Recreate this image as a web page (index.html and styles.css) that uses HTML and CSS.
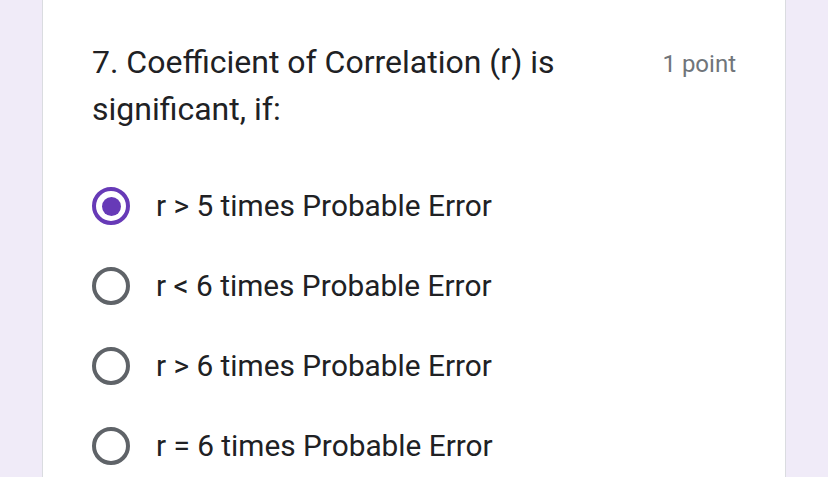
FILE: index.html
```html
<!DOCTYPE html>
<html>
<head>
<meta charset="utf-8">
<link rel="stylesheet" href="styles.css">
</head>
<body>
<div class="card">
  <div class="header">
    <div class="title">7. Coefficient of Correlation (r) is significant, if:</div>
    <div class="points">1 point</div>
  </div>
  <div class="options">
    <div class="option"><span class="radio checked"></span><span class="label">r &gt; 5 times Probable Error</span></div>
    <div class="option"><span class="radio"></span><span class="label">r &lt; 6 times Probable Error</span></div>
    <div class="option"><span class="radio"></span><span class="label">r &gt; 6 times Probable Error</span></div>
    <div class="option"><span class="radio"></span><span class="label">r = 6 times Probable Error</span></div>
  </div>
</div>
</body>
</html>
```
FILE: styles.css
```css
html, body {
  margin: 0;
  padding: 0;
  background: #f0ebf8;
  font-family: Roboto, "Liberation Sans", sans-serif;
  height: 477px;
  overflow: hidden;
}
.card {
  margin-left: 42px;
  width: 744px;
  box-sizing: border-box;
  height: 477px;
  background: #fff;
  border-left: 1px solid #dadce0;
  border-right: 1px solid #dadce0;
  padding: 39px 0 0 49px;
}
.header {
  display: flex;
  justify-content: space-between;
  align-items: flex-start;
}
.title {
  width: 490px;
  font-size: 32px;
  line-height: 47px;
  color: #202124;
}
.points {
  margin-right: 49px;
  padding-top: 2px;
  font-size: 24px;
  line-height: 47px;
  color: #70757a;
}
.options {
  margin-top: 33px;
  display: flex;
  flex-direction: column;
}
.option {
  height: 80px;
  display: flex;
  align-items: center;
}
.radio {
  width: 38px;
  height: 38px;
  box-sizing: border-box;
  border: 4px solid #5f6368;
  border-radius: 50%;
  display: flex;
  align-items: center;
  justify-content: center;
  margin-right: 26px;
  flex: none;
}
.radio.checked {
  border-color: #673ab7;
}
.radio.checked::after {
  content: "";
  width: 19px;
  height: 19px;
  border-radius: 50%;
  background: #673ab7;
}
.label {
  font-size: 29.8px;
  padding-bottom: 2px;
  color: #202124;
}
```
